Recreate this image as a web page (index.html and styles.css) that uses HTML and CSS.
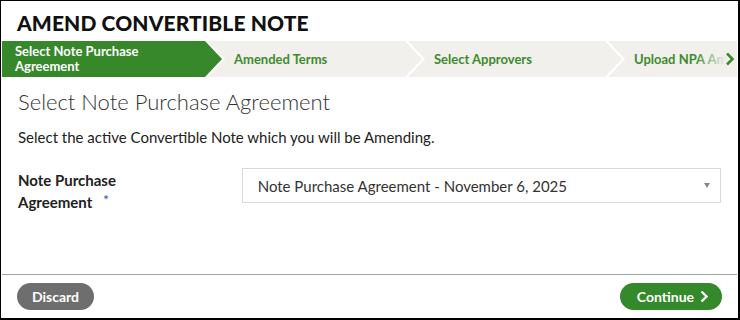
FILE: index.html
```html
<!DOCTYPE html>
<html>
<head>
<meta charset="utf-8">
<link rel="stylesheet" href="styles.css">
</head>
<body>
<div class="modal">
  <h1 class="title">AMEND CONVERTIBLE NOTE</h1>
  <div class="stepper">
    <div class="step step-first active"><span>Select Note Purchase<br>Agreement</span></div>
    <div class="step"><span>Amended Terms</span></div>
    <div class="step"><span>Select Approvers</span></div>
    <div class="step"><span>Upload NPA Amendment</span></div>
    <div class="fade">
      <svg width="10" height="14" viewBox="0 0 10 14"><path d="M2 1.5 L7.5 7 L2 12.5" fill="none" stroke="#3d8b2d" stroke-width="2.6"/></svg>
    </div>
  </div>
  <div class="body">
    <h2 class="subtitle">Select Note Purchase Agreement</h2>
    <p class="desc">Select the active Convertible Note which you will be Amending.</p>
    <div class="field">
      <label class="label">Note Purchase<br>Agreement <span class="req">*</span></label>
      <div class="select">
        <span>Note Purchase Agreement - November 6, 2025</span>
        <span class="caret"></span>
      </div>
    </div>
  </div>
  <div class="footer">
    <button class="btn btn-discard">Discard</button>
    <button class="btn btn-continue">Continue
      <svg width="10" height="13" viewBox="0 0 10 13"><path d="M2.5 1.5 L7.5 6.5 L2.5 11.5" fill="none" stroke="#fff" stroke-width="2.4"/></svg>
    </button>
  </div>
</div>
</body>
</html>
```
FILE: styles.css
```css
* { box-sizing: border-box; }
html, body { margin: 0; padding: 0; background: #fff; }
body { font-family: Lato, "Noto Sans", sans-serif; color: #222; }
.modal {
  width: 740px;
  height: 320px;
  border: 1px solid #000;
  border-right-width: 2px;
  border-bottom-width: 2px;
  display: flex;
  flex-direction: column;
  overflow: hidden;
  padding: 0 1px;
}
.title {
  margin: 0;
  padding: 9px 0 0 15px;
  height: 40px;
  font-size: 21px;
  font-weight: 900;
  color: #111;
  letter-spacing: 0.1px;
}
.stepper {
  position: relative;
  display: flex;
  height: 36px;
  overflow: hidden;
}
.step {
  flex: 0 0 214px;
  margin-left: -14px;
  height: 36px;
  background: #f1f0ec;
  color: #3d8b2d;
  font-size: 13px;
  font-weight: 700;
  display: flex;
  align-items: center;
  padding-left: 26px;
  white-space: nowrap;
  clip-path: polygon(0 0, calc(100% - 17px) 0, 100% 50%, calc(100% - 17px) 100%, 0 100%, 17px 50%);
}
.step-first {
  flex-basis: 220px;
  margin-left: 0;
  padding-left: 13px;
  clip-path: polygon(0 0, calc(100% - 17px) 0, 100% 50%, calc(100% - 17px) 100%, 0 100%);
}
.step.active { background: #36882a; color: #fff; line-height: 15px; }
.fade {
  position: absolute;
  right: 0;
  top: 0;
  width: 42px;
  height: 36px;
  background: linear-gradient(to right, rgba(241,240,236,0), #f1f0ec 75%);
  display: flex;
  align-items: center;
  justify-content: flex-end;
  padding-right: 2px;
}
.body { flex: 1; padding: 0 16px; }
.subtitle {
  margin: 11px 0 0;
  font-size: 22px;
  font-weight: 300;
  color: #333;
  line-height: 28px;
}
.desc {
  margin: 11px 0 0;
  font-size: 15px;
  color: #222;
  line-height: 20px;
}
.field { display: flex; margin-top: 21px; }
.label {
  width: 224px;
  padding-top: 1px;
  font-size: 15px;
  font-weight: 700;
  line-height: 22px;
  color: #222;
}
.req { color: #2f56a8; font-size: 14px; font-weight: 400; margin-left: 7px; vertical-align: top; position: relative; top: -2px; }
.select {
  width: 480px;
  height: 35px;
  border: 1px solid #d3dcdb;
  display: flex;
  align-items: center;
  justify-content: space-between;
  padding: 0 10px 0 15px;
  font-size: 15px;
  color: #333;
}
.caret {
  width: 0; height: 0;
  border-left: 3.5px solid transparent;
  border-right: 3.5px solid transparent;
  border-top: 5px solid #888;
}
.footer {
  height: 44px;
  border-top: 1px solid #9aa6a0;
  display: flex;
  justify-content: space-between;
  align-items: flex-start;
  padding: 8px 15px 0 15px;
}
.btn {
  height: 27px;
  border: none;
  border-radius: 14px;
  color: #fff;
  font-family: inherit;
  font-size: 14px;
  font-weight: 700;
  display: flex;
  align-items: center;
  gap: 5px;
}
.btn-discard { background: #6e6e6e; padding: 0 15px; }
.btn-continue { background: #348a2a; padding: 0 13px 0 17px; }
```
